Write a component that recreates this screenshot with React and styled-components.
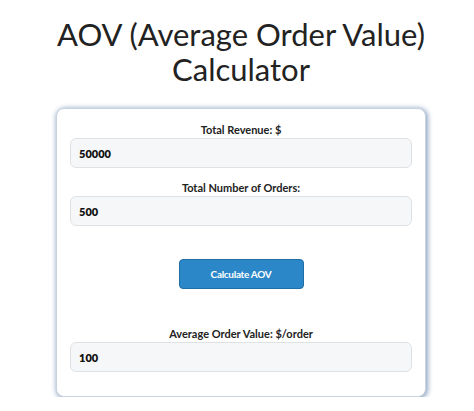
import React from "react";
import styled, { createGlobalStyle } from "styled-components";

const Global = createGlobalStyle`
  html, body { margin: 0; padding: 0; background: #ffffff; }
  body { padding-left: 8px; }
  * { box-sizing: border-box; }
`;

const Page = styled.div`
  display: flex;
  flex-direction: column;
  align-items: center;
  padding-top: 17px;
`;

const Title = styled.h1`
  margin: 0 0 21px;
  font-family: Lato, "Open Sans", sans-serif;
  font-weight: 400;
  font-size: 31px;
  line-height: 35px;
  color: #222222;
  text-align: center;
`;

const Card = styled.div`
  width: 370px;
  background: #ffffff;
  border: 1px solid #c9d3de;
  border-radius: 8px;
  box-shadow: 1px 1px 5px 1px rgba(70, 110, 160, 0.6);
  padding: 13px 13px 24px;
  display: flex;
  flex-direction: column;
`;

const Field = styled.div`
  display: flex;
  flex-direction: column;
  margin-top: ${(p) => p.$gap || 0}px;
`;

const Label = styled.label`
  font-family: Lato, "Open Sans", sans-serif;
  font-weight: 700;
  font-size: 11px;
  line-height: 16px;
  color: #222222;
  text-align: center;
`;

const Input = styled.div`
  height: 30px;
  background: #f6f7f8;
  border: 1px solid #dfe2e5;
  border-radius: 6px;
  padding: 0 8px;
  display: flex;
  align-items: center;
  font-family: Lato, "Open Sans", sans-serif;
  font-weight: 800;
  font-size: 11px;
  color: #111111;
`;

const ButtonRow = styled.div`
  display: flex;
  justify-content: center;
  margin-top: 33px;
`;

const Button = styled.button`
  width: 125px;
  height: 30px;
  background: #2c87c8;
  border: 1px solid #1f6ea8;
  border-radius: 4px;
  color: #ffffff;
  font-family: Lato, "Open Sans", sans-serif;
  font-weight: 700;
  font-size: 10px;
  letter-spacing: -0.3px;
  cursor: pointer;
`;

export default function App() {
  return (
    <>
      <Global />
      <Page>
        <Title>
          AOV (Average Order Value)
          <br />
          Calculator
        </Title>
        <Card>
          <Field>
            <Label>Total Revenue: $</Label>
            <Input>50000</Input>
          </Field>
          <Field $gap={12}>
            <Label>Total Number of Orders:</Label>
            <Input>500</Input>
          </Field>
          <ButtonRow>
            <Button>Calculate AOV</Button>
          </ButtonRow>
          <Field $gap={37}>
            <Label>Average Order Value: $/order</Label>
            <Input>100</Input>
          </Field>
        </Card>
      </Page>
    </>
  );
}
